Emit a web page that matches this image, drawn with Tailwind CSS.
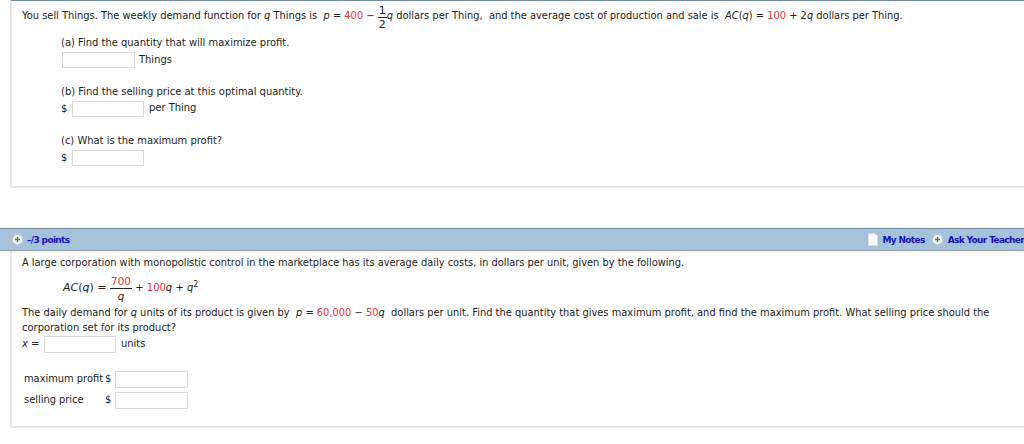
<!DOCTYPE html>
<html>
<head>
<meta charset="utf-8">
<script src="https://cdn.jsdelivr.net/npm/@tailwindcss/browser@4"></script>
</head>
<body class="bg-white overflow-hidden">
<div class="w-[1024px] h-[444px] overflow-hidden font-['DejaVu_Sans',sans-serif] text-[9.95px] leading-[14px] text-[#222]">
  <!-- first question -->
  <div class="h-[188px] ml-[10px] border-t border-t-[#6f899e] border-l-2 border-l-[#e6e6e6] border-b-2 border-b-[#e8e8e8] pl-[10px]">
    <div class="flex items-center h-[30px] whitespace-pre text-[9.89px]">
      <span>You sell Things. The weekly demand function for <i>q</i> Things is  <i>p</i> = <span class="text-[#e8342c]">400</span> − </span>
      <span class="inline-flex flex-col items-center text-[11px] leading-[13px] w-[9px] mt-[2px]"><span class="border-b border-[#222] w-full text-center">1</span><span>2</span></span>
      <span><i>q</i> dollars per Thing,  and the average cost of production and sale is  <i>AC</i>(<i>q</i>) = <span class="text-[#e8342c]">100</span> + 2<i>q</i> dollars per Thing.</span>
    </div>
    <div class="pl-[39px] pt-[5px] flex flex-col">
      <div class="h-[14px]">(a) Find the quantity that will maximize profit.</div>
      <div class="flex items-center h-[17px] mt-[1px]">
        <div class="w-[73px] h-[16px] border border-[#dcdcdc] ml-[1px] mr-[4px]"></div><span>Things</span>
      </div>
      <div class="h-[14px] mt-[17px]">(b) Find the selling price at this optimal quantity.</div>
      <div class="flex items-center h-[17px] mt-[1px]">
        <span class="w-[11px]">$</span><div class="w-[72px] h-[16px] border border-[#dcdcdc] mr-[5px]"></div><span class="-mt-[1px]">per Thing</span>
      </div>
      <div class="h-[14px] mt-[17px]">(c) What is the maximum profit?</div>
      <div class="flex items-center h-[17px] mt-[1px]">
        <span class="w-[11px]">$</span><div class="w-[72px] h-[16px] border border-[#dcdcdc]"></div>
      </div>
    </div>
  </div>
  <!-- header bar -->
  <div class="mt-[40px] h-[23px] bg-[#a6c1da] border-t border-t-[#6f899e] border-b border-b-[#8a9fb0] flex items-center justify-between pl-[12px] text-[9px] tracking-[-0.65px] font-bold text-[#1414c0] whitespace-nowrap">
    <div class="flex items-center gap-[4px]">
      <svg class="w-[11px] h-[11px]" viewBox="0 0 11 11"><circle cx="5.5" cy="5.5" r="5" fill="#eef0ee" stroke="#c4ccd2" stroke-width="0.6"/><path d="M5.5 3v5M3 5.5h5" stroke="#3f8f3a" stroke-width="1.4"/></svg>
      <span>–/3 points</span>
    </div>
    <div class="flex items-center">
      <svg class="w-[10px] h-[13px] mr-[4px]" viewBox="0 0 10 13"><path d="M0.5 0.5H7L9.5 3V12.5H0.5Z" fill="#fbfbfb" stroke="#d8dfe6" stroke-width="0.6"/></svg>
      <span class="mr-[7px]">My Notes</span>
      <svg class="w-[11px] h-[11px] mr-[5px]" viewBox="0 0 11 11"><circle cx="5.5" cy="5.5" r="5" fill="#eef0ee" stroke="#c4ccd2" stroke-width="0.6"/><path d="M5.5 3v5M3 5.5h5" stroke="#3f8f3a" stroke-width="1.4"/></svg>
      <span>Ask Your Teacher</span>
    </div>
  </div>
  <!-- second question -->
  <div class="h-[177px] ml-[10px] border-l-2 border-l-[#e6e6e6] border-b-2 border-b-[#e8e8e8] pl-[10px] pt-[5px]">
    <div class="h-[14px] whitespace-pre text-[9.84px]">A large corporation with monopolistic control in the marketplace has its average daily costs, in dollars per unit, given by the following.</div>
    <div class="flex items-center h-[30px] mt-[3px] pl-[41px] whitespace-pre">
      <span class="text-[11px]"><i>AC</i>(<i>q</i>) = </span>
      <span class="inline-flex flex-col items-center w-[22px] leading-[14px] text-[10.4px]"><span class="border-b border-[#222] w-full text-center text-[#e8342c]">700</span><i>q</i></span>
      <span class="text-[10px]"> + <span class="text-[#e8342c]">100</span><i>q</i> + <i>q</i><sup class="text-[8px] leading-none">2</sup></span>
    </div>
    <div class="mt-[3px] whitespace-pre text-[9.88px]">The daily demand for <i>q</i> units of its product is given by  <i>p</i> = <span class="text-[#e8342c]">60,000</span> − <span class="text-[#e8342c]">50</span><i>q</i>  dollars per unit. Find the quantity that gives maximum profit, and find the maximum profit. What selling price should the</div>
    <div class="mt-[1px]">corporation set for its product?</div>
    <div class="flex items-center h-[18px] mt-[0px]">
      <span class="w-[22px] whitespace-pre"><i>x</i> = </span><div class="w-[72px] h-[17px] border border-[#dcdcdc] mr-[5px]"></div><span>units</span>
    </div>
    <div class="mt-[17px] pl-[2px] flex items-center h-[18px] whitespace-nowrap">
      <span class="w-[81px] text-[9.87px]">maximum profit</span><span class="w-[10px]">$</span><div class="w-[73px] h-[17px] border border-[#dcdcdc]"></div>
    </div>
    <div class="mt-[3px] pl-[2px] flex items-center h-[18px] whitespace-nowrap">
      <span class="w-[81px] text-[9.87px]">selling price</span><span class="w-[10px]">$</span><div class="w-[73px] h-[17px] border border-[#dcdcdc]"></div>
    </div>
  </div>
</div>
</body>
</html>
